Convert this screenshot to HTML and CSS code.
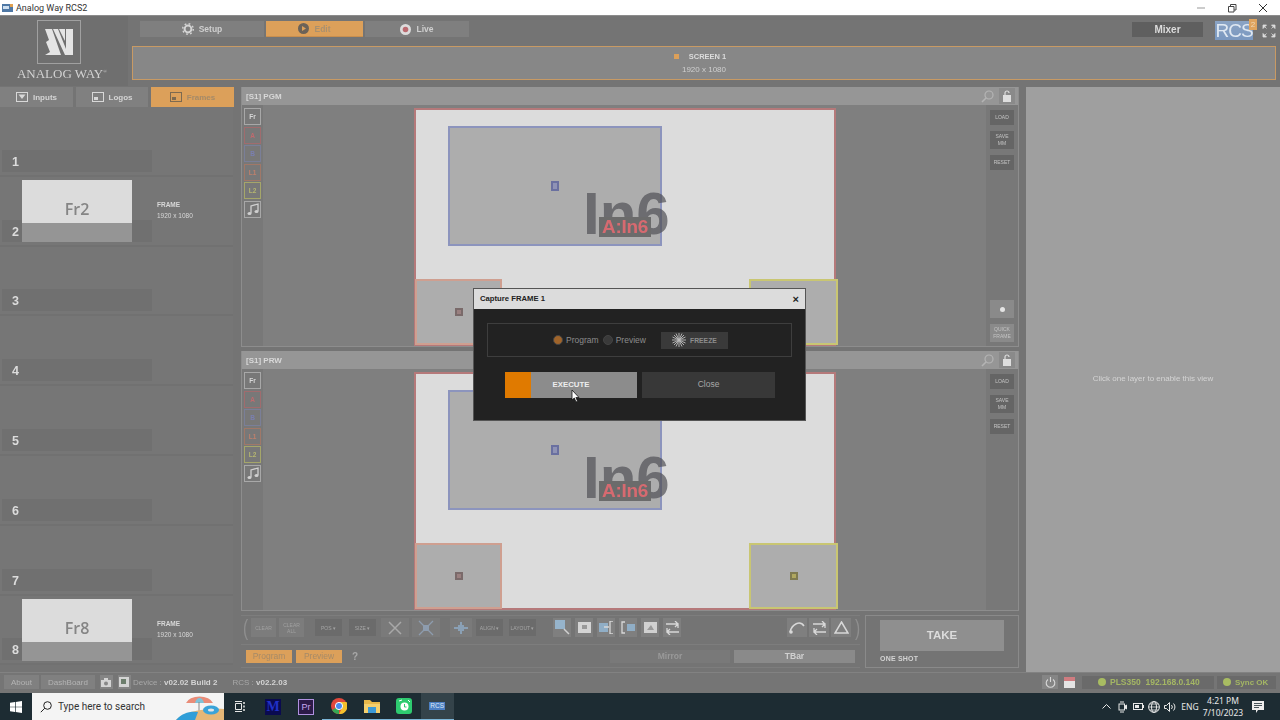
FILE: index.html
```html
<!DOCTYPE html>
<html>
<head>
    <meta charset="utf-8">
    <title>Analog Way RCS2</title>
    <link rel="stylesheet" href="styles.css">
</head>
<body>
    <div class="titlebar">
        <svg class="app-icon" width="11" height="8" viewBox="0 0 11 8"><rect width="11" height="8" fill="#4f78a5"/><rect x="1" y="2" width="6" height="3" fill="#cfe0f0"/><rect x="8" y="0" width="3" height="3" fill="#e0a050"/></svg>
        <span class="title-text">Analog Way RCS2</span>
        <div class="win-controls">
            <svg width="10" height="10" viewBox="0 0 10 10"><path d="M1 5h8" stroke="#999" stroke-width="1"/></svg>
            <svg width="10" height="10" viewBox="0 0 10 10"><path d="M1.500 3.500h5.500v5.500h-5.500zM3.500 3.500v-2h5.500v5.500h-2" fill="none" stroke="#444"/></svg>
            <svg width="10" height="10" viewBox="0 0 10 10"><path d="M1 1l8 8M9 1l-8 8" stroke="#333" stroke-width="1"/></svg>
        </div>
    </div>

    <div class="app">
        <div class="header">
            <div class="logo">
                <div class="logo-box">
                    <svg width="30" height="28" viewBox="0 0 30 28"><path d="M1 1h7l9 26h-16l5-3-4-10 3-2zM9 1h5l8 20v-20h7v26h-8zM15 1h6v12z" fill="#e4e4e4"/></svg>
                </div>
                <div class="logo-name">ANALOG WAY<sup>®</sup></div>
            </div>
            <div class="header-main">
                <div class="nav-row">
                    <div class="mode-tab tab-setup">
                        <svg width="12" height="12" viewBox="0 0 12 12"><circle cx="6" cy="6" r="3.400" fill="none" stroke="#d4d4d4" stroke-width="2"/><circle cx="6" cy="6" r="5.300" fill="none" stroke="#d4d4d4" stroke-width="1.400" stroke-dasharray="1.800 2.360"/></svg>
                        Setup
                    </div>
                    <div class="mode-tab tab-edit">
                        <svg width="11" height="11" viewBox="0 0 11 11"><circle cx="5.500" cy="5.500" r="5.500" fill="#6b6258"/><path d="M4 3l4 2.500-4 2.500z" fill="#dca05a"/></svg>
                        Edit
                    </div>
                    <div class="mode-tab tab-live">
                        <svg width="11" height="11" viewBox="0 0 11 11"><circle cx="5.500" cy="5.500" r="5.500" fill="#dcdcdc"/><circle cx="5.500" cy="5.500" r="2.800" fill="#bb6a70"/></svg>
                        Live
                    </div>
                    <div class="spacer"></div>
                    <div class="mixer">Mixer</div>
                    <div class="rcs-logo">RCS<span class="rcs-two">2</span></div>
                    <svg class="expand" width="14" height="14" viewBox="0 0 14 14"><path d="M1 1h3.500L1 4.500zM13 1v3.500L9.500 1zM1 13v-3.500L4.500 13zM13 13H9.500L13 9.500zM3 3l1.500 1.500M11 3L9.500 4.500M3 11l1.500-1.500M11 11L9.500 9.500" fill="#dcdcdc" stroke="#dcdcdc" stroke-width=".8"/></svg>
                </div>
                <div class="screen-bar">
                    <div class="screen-name"><i class="screen-dot"></i>SCREEN 1</div>
                    <div class="screen-size">1920 x 1080</div>
                </div>
            </div>
        </div>

        <div class="main">
            <div class="left-panel">
                <div class="left-tabs">
                    <div class="left-tab tab-inputs">
                        <svg width="12" height="10" viewBox="0 0 12 10"><rect x=".5" y=".5" width="11" height="9" fill="none" stroke="#d8d8d8"/><path d="M2.500 2.500h7L6 7z" fill="#d8d8d8"/></svg>
                        Inputs
                    </div>
                    <div class="left-tab tab-logos">
                        <svg width="12" height="10" viewBox="0 0 12 10"><rect x=".5" y=".5" width="11" height="9" fill="none" stroke="#d8d8d8"/><rect x="2" y="5" width="4" height="3" fill="#d8d8d8"/></svg>
                        Logos
                    </div>
                    <div class="left-tab tab-frames">
                        <svg width="12" height="10" viewBox="0 0 12 10"><rect x=".5" y=".5" width="11" height="9" fill="none" stroke="#7d6a50"/><rect x="2" y="5" width="4" height="3" fill="#7d6a50"/></svg>
                        Frames
                    </div>
                </div>
                <div class="frame-list">
                    <div class="frame-row"><div class="frame-strip"><span class="frame-num">1</span></div></div>
                    <div class="frame-row">
                        <div class="frame-strip"><span class="frame-num">2</span></div>
                        <div class="frame-thumb"><span class="thumb-label">Fr2</span></div>
                        <div class="frame-info"><b>FRAME</b><span>1920 x 1080</span></div>
                    </div>
                    <div class="frame-row"><div class="frame-strip"><span class="frame-num">3</span></div></div>
                    <div class="frame-row"><div class="frame-strip"><span class="frame-num">4</span></div></div>
                    <div class="frame-row"><div class="frame-strip"><span class="frame-num">5</span></div></div>
                    <div class="frame-row"><div class="frame-strip"><span class="frame-num">6</span></div></div>
                    <div class="frame-row"><div class="frame-strip"><span class="frame-num">7</span></div></div>
                    <div class="frame-row">
                        <div class="frame-strip"><span class="frame-num">8</span></div>
                        <div class="frame-thumb"><span class="thumb-label">Fr8</span></div>
                        <div class="frame-info"><b>FRAME</b><span>1920 x 1080</span></div>
                    </div>
                </div>
            </div>

            <div class="center">
                <div class="view-panel">
                    <div class="view-head">
                        <span class="view-title">[S1] PGM</span>
                        <svg class="view-search" width="13" height="13" viewBox="0 0 13 13"><circle cx="8" cy="5" r="4" fill="none" stroke="#b4b4b4" stroke-width="1.200"/><path d="M5 8l-4 4" stroke="#b4b4b4" stroke-width="1.600"/></svg>
                        <div class="view-lock"><svg width="10" height="12" viewBox="0 0 10 12"><rect x="1" y="5" width="8" height="7" fill="#dedede"/><path d="M3 5V3a2 2 0 0 1 4 0" fill="none" stroke="#dedede" stroke-width="1.200"/></svg></div>
                    </div>
                    <div class="view-body">
                        <div class="layer-rail">
                            <div class="rail-btn rail-fr">Fr</div>
                            <div class="rail-btn rail-a">A</div>
                            <div class="rail-btn rail-b">B</div>
                            <div class="rail-btn rail-l1">L1</div>
                            <div class="rail-btn rail-l2">L2</div>
                            <div class="rail-btn rail-audio"><svg width="12" height="13" viewBox="0 0 12 13"><path d="M4 10V3l7-2v7" fill="none" stroke="#d0d0d0" stroke-width="1.300"/><ellipse cx="2.500" cy="10.500" rx="2" ry="1.500" fill="#d0d0d0"/><ellipse cx="9.500" cy="8.500" rx="2" ry="1.500" fill="#d0d0d0"/></svg></div>
                        </div>
                        <div class="stage">
                            <div class="canvas">
                                <div class="layer layer-main">
                                    <span class="layer-tag tag-blue"></span>
                                </div>
                                <div class="source-name">In6</div>
                                <div class="source-tag">A:In6</div>
                                <div class="layer layer-l1"><span class="layer-tag tag-red"></span></div>
                                <div class="layer layer-l2"><span class="layer-tag tag-yellow"></span></div>
                            </div>
                        </div>
                        <div class="action-rail">
                            <div class="action-btn">LOAD</div>
                            <div class="action-btn action-tall">SAVE<br>MM</div>
                            <div class="action-btn">RESET</div>
                            <div class="spacer"></div>
                            <div class="quick-btn"><i class="quick-dot"></i></div>
                            <div class="quick-btn quick-text">QUICK<br>FRAME</div>
                        </div>
                    </div>
                </div>

                <div class="view-panel">
                    <div class="view-head">
                        <span class="view-title">[S1] PRW</span>
                        <svg class="view-search" width="13" height="13" viewBox="0 0 13 13"><circle cx="8" cy="5" r="4" fill="none" stroke="#b4b4b4" stroke-width="1.200"/><path d="M5 8l-4 4" stroke="#b4b4b4" stroke-width="1.600"/></svg>
                        <div class="view-lock"><svg width="10" height="12" viewBox="0 0 10 12"><rect x="1" y="5" width="8" height="7" fill="#dedede"/><path d="M3 5V3a2 2 0 0 1 4 0" fill="none" stroke="#dedede" stroke-width="1.200"/></svg></div>
                    </div>
                    <div class="view-body">
                        <div class="layer-rail">
                            <div class="rail-btn rail-fr">Fr</div>
                            <div class="rail-btn rail-a">A</div>
                            <div class="rail-btn rail-b">B</div>
                            <div class="rail-btn rail-l1">L1</div>
                            <div class="rail-btn rail-l2">L2</div>
                            <div class="rail-btn rail-audio"><svg width="12" height="13" viewBox="0 0 12 13"><path d="M4 10V3l7-2v7" fill="none" stroke="#d0d0d0" stroke-width="1.300"/><ellipse cx="2.500" cy="10.500" rx="2" ry="1.500" fill="#d0d0d0"/><ellipse cx="9.500" cy="8.500" rx="2" ry="1.500" fill="#d0d0d0"/></svg></div>
                        </div>
                        <div class="stage">
                            <div class="canvas">
                                <div class="layer layer-main">
                                    <span class="layer-tag tag-blue"></span>
                                </div>
                                <div class="source-name">In6</div>
                                <div class="source-tag">A:In6</div>
                                <div class="layer layer-l1"><span class="layer-tag tag-red"></span></div>
                                <div class="layer layer-l2"><span class="layer-tag tag-yellow"></span></div>
                            </div>
                        </div>
                        <div class="action-rail">
                            <div class="action-btn">LOAD</div>
                            <div class="action-btn action-tall">SAVE<br>MM</div>
                            <div class="action-btn">RESET</div>
                        </div>
                    </div>
                </div>

                <div class="controls">
                    <div class="controls-main">
                        <div class="tool-row">
                            <span class="paren">(</span>
                            <div class="tool-btn">CLEAR</div>
                            <div class="tool-btn">CLEAR<br>ALL</div>
                            <div class="tool-drop drop-pos">POS ▾</div>
                            <div class="tool-drop drop-size">SIZE ▾</div>
                            <div class="tool-icon icon-cross"><svg width="16" height="16" viewBox="0 0 16 16"><path d="M2 2l12 12M14 2L2 14" stroke="#a8a8a8" stroke-width="1.500"/></svg></div>
                            <div class="tool-icon"><svg width="16" height="16" viewBox="0 0 16 16"><path d="M1 1l14 14M15 1L1 15" stroke="#8d9cae" stroke-width="1.300"/><rect x="5" y="5" width="6" height="6" fill="#8d9cae"/></svg></div>
                            <div class="tool-icon icon-plus"><svg width="16" height="14" viewBox="0 0 16 14"><path d="M1 7h14M8 1v12" stroke="#8aa0b5" stroke-width="2"/><rect x="5" y="4" width="6" height="6" fill="#8aa0b5"/></svg></div>
                            <div class="tool-drop drop-align">ALIGN ▾</div>
                            <div class="tool-drop drop-layout">LAYOUT ▾</div>
                            <div class="tool-sq sq-first"><svg width="16" height="15" viewBox="0 0 16 15"><rect x="1" y="0" width="10" height="9" fill="#96b4cc"/><path d="M10 9l5 5" stroke="#d0d0d0" stroke-width="1.500"/></svg></div>
                            <div class="tool-sq"><svg width="13" height="11" viewBox="0 0 13 11"><rect width="13" height="11" fill="#d4d4d4"/><rect x="4" y="3" width="5" height="4" fill="#999"/></svg></div>
                            <div class="tool-sq"><svg width="15" height="13" viewBox="0 0 15 13"><rect y="2" width="9" height="9" fill="#90aec6"/><path d="M14 0h-3v13h3M5 6h5" fill="none" stroke="#d8d8d8" stroke-width="1.300"/></svg></div>
                            <div class="tool-sq"><svg width="15" height="13" viewBox="0 0 15 13"><rect x="6" y="3" width="8" height="7" fill="#90aec6"/><path d="M4 1H1v11h3M1 1h3M1 12h3" fill="none" stroke="#d8d8d8" stroke-width="1.300"/></svg></div>
                            <div class="tool-sq"><svg width="13" height="11" viewBox="0 0 13 11"><rect width="13" height="11" fill="#d0d0d0"/><path d="M3 8l4-5 3 5z" fill="#999"/></svg></div>
                            <div class="tool-sq"><svg width="15" height="14" viewBox="0 0 15 14"><path d="M1 3h12v4M14 11H2V7M10 0l3 3-3 3M5 8l-3 3 3 3" fill="none" stroke="#d8d8d8" stroke-width="1.300"/></svg></div>
                            <div class="spacer"></div>
                            <div class="tool-sq sq-plain"><svg width="16" height="13" viewBox="0 0 16 13"><path d="M1 11C3 3 11-1 15 5" fill="none" stroke="#d8d8d8" stroke-width="1.500"/><circle cx="2" cy="11" r="1.800" fill="#d8d8d8"/></svg></div>
                            <div class="tool-sq sq-plain"><svg width="15" height="14" viewBox="0 0 15 14"><path d="M1 3h12v4M14 11H2V7M10 0l3 3-3 3M5 8l-3 3 3 3" fill="none" stroke="#d8d8d8" stroke-width="1.300"/></svg></div>
                            <div class="tool-sq sq-plain"><svg width="15" height="13" viewBox="0 0 15 13"><path d="M7.500 1L14 12H1z" fill="none" stroke="#d8d8d8" stroke-width="1.500"/></svg></div>
                            <span class="paren">)</span>
                        </div>
                        <div class="mode-row">
                            <div class="orange-btn">Program</div>
                            <div class="orange-btn">Preview</div>
                            <span class="help">?</span>
                            <div class="spacer"></div>
                            <div class="mirror-btn">Mirror</div>
                            <div class="tbar-btn">TBar</div>
                        </div>
                    </div>
                    <div class="take-box">
                        <div class="take-btn">TAKE</div>
                        <div class="take-mode">ONE SHOT</div>
                    </div>
                </div>
            </div>

            <div class="right-panel">Click one layer to enable this view</div>
        </div>

        <div class="footer">
            <div class="foot-btn">About</div>
            <div class="foot-btn">DashBoard</div>
            <div class="foot-sq foot-cam"><svg width="10" height="9" viewBox="0 0 10 9"><rect y="2" width="10" height="7" fill="#d4d4d4"/><rect x="3" y="0" width="4" height="2" fill="#d4d4d4"/><circle cx="5" cy="5.500" r="2" fill="#888"/></svg></div>
            <div class="foot-sq foot-pic"><svg width="10" height="10" viewBox="0 0 10 10"><rect width="10" height="10" fill="#d4d4d4"/><rect x="2" y="2" width="5" height="5" fill="#6c7d6c"/></svg></div>
            <span class="foot-text">Device : <b>v02.02 Build 2</b></span>
            <span class="foot-text foot-rcs">RCS : <b>v02.2.03</b></span>
            <div class="spacer"></div>
            <div class="foot-sq foot-power"><svg width="11" height="11" viewBox="0 0 11 11"><path d="M3 2.500a4.300 4.300 0 1 0 5 0M5.500 0v5" fill="none" stroke="#d8d8d8" stroke-width="1.100"/></svg></div>
            <div class="foot-flag"></div>
            <div class="status-box status-device"><i class="led"></i>PLS350&nbsp; 192.168.0.140</div>
            <div class="status-box status-sync"><i class="led"></i>Sync OK</div>
        </div>
    </div>

    <div class="taskbar">
        <div class="start"><svg width="12" height="12" viewBox="0 0 12 12"><path d="M0 1.700l5-.7v4.700H0zM5.700.9L12 0v5.700H5.700zM0 6.300h5V11l-5-.7zM5.700 6.300H12V12l-6.300-.9z" fill="#fff"/></svg></div>
        <div class="search">
            <svg width="12" height="12" viewBox="0 0 12 12"><circle cx="7.500" cy="4.500" r="3.800" fill="none" stroke="#222" stroke-width="1"/><path d="M4.800 7.200L.8 11.200" stroke="#222" stroke-width="1"/></svg>
            <span class="search-text">Type here to search</span>
            <svg class="search-art" width="48" height="27" viewBox="0 0 48 27"><path d="M10 10a14 9 0 0 1 27 0z" fill="#e98c78"/><path d="M19 10a5 9 0 0 1 9 0z" fill="#7fc2d8"/><path d="M23 9v13" stroke="#888"/><path d="M0 27c8-9 30-12 48-11v11z" fill="#e5b777"/><path d="M0 27c6-7 14-9 22-8l-3 8z" fill="#2f9ed8"/><ellipse cx="35" cy="17" rx="8" ry="4.500" fill="#3aa3d8"/><ellipse cx="35" cy="17" rx="3" ry="1.500" fill="#e5e5e5"/></svg>
        </div>
        <div class="task-icons">
            <div class="task-icon"><svg width="12" height="11" viewBox="0 0 12 11"><path d="M1 .5h7M1 10.500h7M1.500 2.500h6v6h-6z" fill="none" stroke="#e8e8e8"/><path d="M10 1v2M10 4.500v2M10 8v2" stroke="#e8e8e8" stroke-width="1.500"/></svg></div>
            <div class="task-icon"><span class="ico-m">M</span></div>
            <div class="task-icon"><span class="ico-pr">Pr</span></div>
            <div class="task-icon icon-open"><svg width="16" height="16" viewBox="0 0 16 16"><circle cx="8" cy="8" r="8" fill="#e0483c"/><path d="M8 8L1.100 12A8 8 0 0 0 8 16z" fill="#35a853"/><path d="M8 4h7.500A8 8 0 0 1 8 16l4-8z" fill="#f5c02c"/><circle cx="8" cy="8" r="3.600" fill="#4a8bf0" stroke="#fff"/></svg></div>
            <div class="task-icon icon-open"><svg width="16" height="14" viewBox="0 0 16 14"><path d="M0 1h6l2 2h8v11H0z" fill="#e8b84a"/><rect y="5" width="16" height="9" fill="#f4d06e"/><rect x="4" y="8" width="8" height="6" fill="#3c9ad8"/></svg></div>
            <div class="task-icon icon-open"><svg width="16" height="16" viewBox="0 0 16 16"><rect width="16" height="16" rx="3" fill="#2ecb70"/><circle cx="8.500" cy="8.500" r="4" fill="#fff"/><path d="M8.500 6v3h2" fill="none" stroke="#2ecb70"/><path d="M3 3l3-1M12 2l2 2" stroke="#fff"/></svg></div>
            <div class="task-icon icon-active"><span class="ico-rcs">RCS</span></div>
        </div>
        <div class="spacer"></div>
        <div class="tray">
            <div class="tray-item"><svg width="9" height="5" viewBox="0 0 9 5"><path d="M.5 4.500l4-4 4 4" fill="none" stroke="#e8e8e8"/></svg></div>
            <div class="tray-item"><svg width="9" height="12" viewBox="0 0 9 12"><rect x="1" y="3" width="5.500" height="6" fill="none" stroke="#e8e8e8"/><path d="M7 5l2-1v4l-2-1zM2 1h4M2 11h4" stroke="#e8e8e8" fill="#e8e8e8"/></svg></div>
            <div class="tray-item"><svg width="11" height="7" viewBox="0 0 11 7"><rect x=".5" y=".5" width="9" height="6" fill="none" stroke="#e8e8e8"/><rect x="2" y="2" width="4" height="3" fill="#e8e8e8"/><rect x="10" y="2" width="1" height="3" fill="#e8e8e8"/></svg></div>
            <div class="tray-item"><svg width="12" height="12" viewBox="0 0 12 12"><circle cx="6" cy="6" r="5.400" fill="none" stroke="#e8e8e8"/><ellipse cx="6" cy="6" rx="2.500" ry="5.400" fill="none" stroke="#e8e8e8"/><path d="M.6 6h10.800M1.500 3h9M1.500 9h9" stroke="#e8e8e8" stroke-width=".8"/></svg></div>
            <div class="tray-item"><svg width="12" height="10" viewBox="0 0 12 10"><path d="M.5 3.500h2l3-3v9l-3-3h-2z" fill="none" stroke="#e8e8e8"/><path d="M7.500 3a3 3 0 0 1 0 4M9.500 1.500a5 5 0 0 1 0 7" fill="none" stroke="#e8e8e8"/></svg></div>
            <span class="tray-lang">ENG</span>
            <div class="clock"><span>4:21 PM</span><span>7/10/2023</span></div>
            <svg class="notify" width="12" height="12" viewBox="0 0 12 12"><path d="M0 0h12v9H6l-2 3V9H0z" fill="#eee"/><path d="M2 2.500h8M2 4.500h8M2 6.500h5" stroke="#1d2c33" stroke-width=".8"/></svg>
        </div>
    </div>

    <div class="dialog">
        <div class="dialog-head">
            <span class="dialog-title">Capture FRAME 1</span>
            <span class="dialog-close">×</span>
        </div>
        <div class="dialog-body">
            <div class="source-box">
                <span class="radio radio-on"></span><span class="radio-label">Program</span>
                <span class="radio"></span><span class="radio-label">Preview</span>
                <div class="freeze-btn">
                    <svg width="14" height="14" viewBox="0 0 14 14"><path d="M7 0v14M0 7h14M2 2l10 10M12 2L2 12M4 .5l6 13M10 .5l-6 13M.5 4l13 6M.5 10l13-6" stroke="#bdbdbd" stroke-width=".9"/></svg>
                    FREEZE
                </div>
            </div>
            <div class="dialog-actions">
                <div class="execute-btn"><i class="execute-mark"></i><span class="execute-label">EXECUTE</span></div>
                <div class="close-btn">Close</div>
            </div>
        </div>
    </div>

    <svg class="cursor" width="9" height="14" viewBox="0 0 9 14"><path d="M1 1v10l2.300-2 1.700 4 1.600-.7-1.700-3.800H8z" fill="#fff" stroke="#111" stroke-width=".8"/></svg>
</body>
</html>
```

FILE: styles.css
```css
* {
    box-sizing: border-box;
}

html, body {
    margin: 0;
    height: 720px;
    overflow: hidden;
}

body {
    position: relative;
    width: 1280px;
    display: flex;
    flex-direction: column;
    font-family: "Liberation Sans", Arial, sans-serif;
    background: #1d2c33;
}

.spacer {
    flex: 1;
}

/* window title */

.titlebar {
    height: 15px;
    flex: none;
    display: flex;
    align-items: center;
    background: #fff;
    padding-left: 2px;
}

.title-text {
    margin-left: 3px;
    font: 9px Roboto, sans-serif;
    color: #333;
}

.win-controls {
    margin-left: auto;
    display: flex;
    gap: 21px;
    padding-right: 12px;
}

/* app shell - the video it comes from is a bit soft */

.app {
    height: 678px;
    flex: none;
    display: flex;
    flex-direction: column;
    background: #747474;
    border-top: 1px solid #8c8c8c;
    filter: blur(0.4px);
}

.header {
    height: 70px;
    flex: none;
    display: flex;
}

.logo {
    width: 128px;
    flex: none;
    display: flex;
    flex-direction: column;
    align-items: center;
    padding-top: 4px;
    background: #6f6f6f;
}

.logo-box {
    width: 44px;
    height: 44px;
    margin-right: 10px;
    display: flex;
    align-items: center;
    justify-content: center;
    border: 1px solid #a0a0a0;
}

.logo-name {
    margin: 2px 4px 0 0;
    font: 13px "Liberation Serif", serif;
    color: #d2d2d2;
    white-space: nowrap;
}

.logo-name sup {
    font-size: 5px;
}

.header-main {
    flex: 1;
    display: flex;
    flex-direction: column;
    padding: 5px 4px 0 4px;
}

.nav-row {
    height: 25px;
    display: flex;
    align-items: flex-start;
}

.mode-tab {
    height: 16px;
    margin-right: 2px;
    display: flex;
    align-items: center;
    justify-content: center;
    gap: 5px;
    background: #7f7f7f;
    font-size: 8.500px;
    font-weight: bold;
    color: #cfcfcf;
}

.tab-setup {
    margin-left: 8px;
    width: 124px;
}

.tab-edit {
    width: 97px;
    background: #dca05a;
    color: #a9906f;
    border-bottom: 1px solid #c98f4e;
}

.tab-live {
    width: 104px;
}

.mixer {
    width: 71px;
    height: 15px;
    margin-top: 1px;
    display: flex;
    align-items: center;
    justify-content: center;
    background: #5f5f5f;
    font-size: 10px;
    font-weight: bold;
    color: #dcdcdc;
}

.rcs-logo {
    position: relative;
    width: 38px;
    height: 19px;
    margin: 0 9px 0 12px;
    background: linear-gradient(#8aa3c4, #7a98c0);
    font-size: 19px;
    line-height: 19px;
    letter-spacing: -1px;
    text-align: center;
    color: #dfe8f2;
}

.rcs-two {
    position: absolute;
    top: -2px;
    right: -4px;
    width: 8px;
    height: 11px;
    background: #e0a45e;
    font-size: 8px;
    line-height: 11px;
    letter-spacing: 0;
    color: #f0d8b8;
}

.expand {
    margin-top: 3px;
}

.screen-bar {
    height: 34px;
    display: flex;
    flex-direction: column;
    align-items: center;
    justify-content: center;
    gap: 4px;
    background: #878787;
    border: 1px solid #c89a64;
    color: #dcdcdc;
}

.screen-name {
    display: flex;
    align-items: center;
    padding-right: 8px;
    font-size: 7.500px;
    font-weight: bold;
    line-height: 9px;
}

.screen-dot {
    width: 5px;
    height: 5px;
    margin-right: 10px;
    background: #dca05a;
}

.screen-size {
    font-size: 8px;
    line-height: 9px;
    color: #cfcfcf;
}

/* main area */

.main {
    flex: 1;
    min-height: 0;
    display: flex;
    padding-top: 1px;
}

.left-panel {
    width: 234px;
    flex: none;
    display: flex;
    flex-direction: column;
}

.left-tabs {
    height: 20px;
    flex: none;
    display: flex;
    gap: 3px;
}

.left-tab {
    display: flex;
    align-items: center;
    justify-content: center;
    gap: 5px;
    background: #808080;
    font-size: 8px;
    font-weight: bold;
    color: #d4d4d4;
}

.tab-inputs {
    width: 73px;
}

.tab-logos {
    width: 72px;
}

.tab-frames {
    width: 83px;
    background: #dca05a;
    color: #a58a68;
}

.frame-list {
    flex: 1;
    display: flex;
    flex-direction: column;
}

.frame-row {
    position: relative;
    height: 69.800px;
    flex: none;
    margin-right: 1px;
    border-bottom: 2px solid #717171;
    background: #767676;
}

.frame-strip {
    position: absolute;
    left: 2px;
    right: 81px;
    bottom: 3px;
    height: 22px;
    background: #707070;
}

.frame-num {
    position: absolute;
    left: 10px;
    top: 5px;
    font-size: 12.500px;
    font-weight: bold;
    line-height: 15px;
    color: #dcdcdc;
}

.frame-thumb {
    position: absolute;
    left: 22px;
    top: 3px;
    width: 110px;
    height: 62px;
    display: flex;
    justify-content: center;
    padding-top: 19px;
    background: linear-gradient(#dcdcdc 43px, #959595 43px);
}

.thumb-label {
    font: 600 16px "Open Sans", sans-serif;
    line-height: 20px;
    color: #858585;
}

.frame-info {
    position: absolute;
    left: 157px;
    top: 24px;
    display: flex;
    flex-direction: column;
    gap: 3px;
    font-size: 6.500px;
    line-height: 8px;
    color: #d8d8d8;
}

/* PGM and PRW views */

.center {
    width: 778px;
    flex: none;
    margin-left: 7px;
    display: flex;
    flex-direction: column;
    gap: 4px;
}

.view-panel {
    height: 260px;
    flex: none;
    display: flex;
    flex-direction: column;
    border: 1px solid #8d8d8d;
    border-top: 0;
}

.view-head {
    height: 18px;
    flex: none;
    display: flex;
    align-items: center;
    background: #969696;
    padding: 0 3px 0 4px;
}

.view-title {
    font-size: 8px;
    font-weight: bold;
    color: #d8d8d8;
}

.view-search {
    margin-left: auto;
    margin-right: 5px;
}

.view-lock {
    width: 16px;
    height: 16px;
    display: flex;
    align-items: center;
    justify-content: center;
    background: #8a8a8a;
}

.view-body {
    flex: 1;
    min-height: 0;
    display: flex;
    background: #7f7f7f;
}

.layer-rail {
    width: 21px;
    flex: none;
    display: flex;
    flex-direction: column;
    gap: 1.600px;
    padding: 3px 0 0 2px;
    background: #787878;
}

.rail-btn {
    width: 17px;
    height: 17px;
    display: flex;
    align-items: center;
    justify-content: center;
    border: 1px solid #a8a8a8;
    font-size: 6.500px;
    font-weight: bold;
    color: #d8d8d8;
}

.rail-a {
    border-color: #a06c6e;
    color: #c06a6e;
}

.rail-b {
    border-color: #7a7f98;
    color: #7a7fb0;
}

.rail-l1 {
    border-color: #a07868;
    color: #c0806c;
}

.rail-l2 {
    border-color: #a5a66a;
    color: #b5b670;
}

.stage {
    flex: 1;
    padding: 3px 0 0 151px;
}

.canvas {
    position: relative;
    width: 422px;
    height: 238px;
    background: #dcdcdc;
    border: 2px solid #b5797a;
}

.layer {
    position: absolute;
    display: flex;
    align-items: center;
    justify-content: center;
    background: #adadad;
}

.layer-main {
    left: 32px;
    top: 16px;
    width: 214px;
    height: 120px;
    border: 2px solid #8c94bd;
}

.layer-l1 {
    left: -1px;
    top: 169px;
    width: 87px;
    height: 66px;
    border: 2px solid #cf9f90;
}

.layer-l2 {
    left: 333px;
    top: 169px;
    width: 89px;
    height: 66px;
    border: 2px solid #c9c672;
}

.layer-tag {
    width: 8px;
    height: 10px;
    border: 2px solid #6a70a0;
    background: #8f93b5;
}

.tag-red {
    height: 8px;
    border-color: #7a6a6a;
    background: #9a8080;
}

.tag-yellow {
    height: 8px;
    border-color: #7f7a50;
    background: #b0a860;
}

.source-name {
    position: absolute;
    left: 167px;
    top: 73px;
    font-size: 60px;
    font-weight: bold;
    line-height: 62px;
    color: rgba(80, 80, 85, 0.7);
}

.source-tag {
    position: absolute;
    left: 183px;
    top: 107px;
    width: 52px;
    height: 20px;
    background: #6b6b6b;
    font-size: 19px;
    font-weight: bold;
    line-height: 20px;
    letter-spacing: -.3px;
    text-align: center;
    white-space: nowrap;
    color: #d66a70;
}

.action-rail {
    width: 32px;
    flex: none;
    display: flex;
    flex-direction: column;
    align-items: center;
    gap: 6px;
    padding: 5px 0 4px;
    background: #787878;
}

.action-btn {
    width: 24px;
    height: 15px;
    display: flex;
    align-items: center;
    justify-content: center;
    background: #656565;
    font-size: 5px;
    line-height: 7px;
    text-align: center;
    color: #c4c4c4;
}

.action-tall {
    height: 18px;
}

.quick-btn {
    width: 24px;
    height: 18px;
    display: flex;
    align-items: center;
    justify-content: center;
    background: #8a8a8a;
    font-size: 5px;
    line-height: 7px;
    text-align: center;
    color: #c4c4c4;
}

.quick-dot {
    width: 5px;
    height: 5px;
    border-radius: 50%;
    background: #e4e4e4;
}

/* bottom controls */

.controls {
    height: 53px;
    flex: none;
    display: flex;
    gap: 5px;
}

.controls-main {
    flex: 1;
    min-width: 0;
    display: flex;
    flex-direction: column;
}

.tool-row {
    height: 30px;
    flex: none;
    display: flex;
    align-items: flex-start;
    gap: 3px;
    padding: 2px 0 0 1px;
    border-bottom: 1px solid #7d7d7d;
    border-top: 1px solid #7d7d7d;
}

.paren {
    width: 6px;
    font: 22px/19px "Liberation Sans", sans-serif;
    color: #8f8f8f;
    transform: scaleX(.7);
}

.tool-btn {
    width: 25px;
    height: 19px;
    display: flex;
    align-items: center;
    justify-content: center;
    background: #7c7c7c;
    font-size: 5px;
    line-height: 6px;
    text-align: center;
    color: #a0a0a0;
}

.tool-drop {
    width: 27px;
    height: 17px;
    margin-top: 1px;
    display: flex;
    align-items: center;
    justify-content: center;
    background: #6b6b6b;
    font-size: 5px;
    color: #a5a5a5;
    white-space: nowrap;
}

.drop-pos {
    margin-left: 8px;
}

.drop-size {
    margin-left: 4px;
}

.drop-align {
    margin-left: 1px;
}

.drop-layout {
    margin-left: 3px;
}

.tool-icon {
    width: 28px;
    height: 19px;
    display: flex;
    align-items: center;
    justify-content: center;
    background: #7a7a7a;
}

.icon-cross {
    margin-left: 2px;
}

.icon-plus {
    width: 22px;
    margin-left: 7px;
}

.tool-sq {
    width: 18px;
    height: 19px;
    margin-left: 1px;
    display: flex;
    align-items: center;
    justify-content: center;
    background: #7f7f7f;
}

.sq-first {
    margin-left: 14px;
}

.sq-plain {
    width: 20px;
    margin-left: -1px;
}

.mode-row {
    flex: 1;
    display: flex;
    align-items: center;
    gap: 4px;
    padding: 0 5px;
    border-bottom: 1px solid #7d7d7d;
}

.orange-btn {
    width: 46px;
    height: 13px;
    display: flex;
    align-items: center;
    justify-content: center;
    background: #dca05a;
    font-size: 8.500px;
    color: #a58a68;
}

.help {
    margin-left: 6px;
    font-size: 10px;
    font-weight: bold;
    color: #a8a8a8;
}

.mirror-btn,
.tbar-btn {
    width: 120px;
    height: 13px;
    display: flex;
    align-items: center;
    justify-content: center;
    background: #797979;
    font-size: 8.500px;
    font-weight: bold;
    color: #999;
}

.tbar-btn {
    width: 121px;
    background: #8a8a8a;
    color: #d0d0d0;
}

.take-box {
    width: 154px;
    flex: none;
    padding: 4px 14px 0 14px;
    border: 1px solid #8a8a8a;
}

.take-btn {
    height: 31px;
    display: flex;
    align-items: center;
    justify-content: center;
    padding-bottom: 1px;
    background: #8f8f8f;
    font-size: 11.500px;
    font-weight: bold;
    color: #dcdcdc;
}

.take-mode {
    margin-top: 4px;
    font-size: 7px;
    font-weight: bold;
    letter-spacing: .2px;
    color: #d4d4d4;
}

.right-panel {
    width: 254px;
    flex: none;
    margin-left: 7px;
    padding-top: 287px;
    background: #9f9f9f;
    font-size: 8px;
    text-align: center;
    color: #d4d4d4;
}

/* footer */

.footer {
    height: 21px;
    flex: none;
    display: flex;
    align-items: center;
    gap: 2px;
    padding: 0 4px 2px;
    background: #757575;
    border-top: 1px solid #828282;
    font-size: 8px;
    color: #b4b4b4;
}

.foot-btn {
    height: 14px;
    padding: 0 7px;
    display: flex;
    align-items: center;
    background: #808080;
}

.foot-sq {
    width: 13px;
    height: 14px;
    display: flex;
    align-items: center;
    justify-content: center;
    background: #858585;
}

.foot-cam {
    margin-left: 3px;
}

.foot-pic {
    margin-left: 3px;
}

.foot-text {
    color: #a8a8a8;
}

.foot-text b {
    color: #d4d4d4;
}

.foot-rcs {
    margin-left: 13px;
}

.foot-power {
    width: 16px;
    margin-right: 4px;
}

.foot-flag {
    width: 11px;
    height: 11px;
    margin-right: 5px;
    background: linear-gradient(#cf7c80 40%, #e4e4e4 40%);
}

.status-box {
    height: 13px;
    display: flex;
    align-items: center;
    gap: 4px;
    padding-left: 17px;
    background: #6a6a6a;
    font-size: 8.500px;
    font-weight: bold;
    color: #a4b664;
}

.status-device {
    width: 132px;
    margin-right: 1px;
}

.status-sync {
    width: 59px;
    padding-left: 7px;
    font-size: 8px;
}

.led {
    width: 8px;
    height: 8px;
    margin-left: -1px;
    flex: none;
    border-radius: 50%;
    background: #a8bc62;
}

/* windows taskbar */

.taskbar {
    height: 27px;
    flex: none;
    display: flex;
    align-items: center;
    background: #1d2c33;
}

.start {
    width: 32px;
    height: 27px;
    display: flex;
    align-items: center;
    justify-content: center;
}

.search {
    position: relative;
    width: 192px;
    height: 27px;
    display: flex;
    align-items: center;
    padding-left: 8px;
    background: #f4f4f4;
}

.search-text {
    margin-left: 6px;
    font: 10px Roboto, sans-serif;
    color: #333;
}

.search-art {
    position: absolute;
    right: 0;
    bottom: 0;
}

.task-icons {
    display: flex;
}

.task-icon {
    width: 32.800px;
    height: 27px;
    display: flex;
    align-items: center;
    justify-content: center;
}

.icon-open {
    border-bottom: 1px solid #7cb6d8;
}

.icon-active {
    background: #34434a;
    border-bottom: 1px solid #7cb6d8;
}

.ico-m {
    width: 16px;
    height: 16px;
    background: #0a0a50;
    font: bold 14px "Liberation Serif", serif;
    line-height: 16px;
    text-align: center;
    color: #2030c8;
}

.ico-pr {
    width: 16px;
    height: 16px;
    border: 1px solid #b090e0;
    background: #2c1a48;
    font-size: 9px;
    line-height: 14px;
    text-align: center;
    color: #c8a8f0;
}

.ico-rcs {
    padding: 0 1px;
    background: #4c80c4;
    font-size: 6.500px;
    line-height: 8px;
    color: #dfe8f2;
}

.tray {
    display: flex;
    align-items: center;
    padding-right: 16px;
    color: #e8e8e8;
}

.tray-item {
    width: 16px;
    display: flex;
    justify-content: center;
}

.tray-lang {
    width: 24px;
    font: 8.500px "Noto Sans", sans-serif;
    text-align: center;
}

.clock {
    width: 42px;
    display: flex;
    flex-direction: column;
    align-items: center;
    font: 8.500px "Noto Sans", sans-serif;
    line-height: 12px;
}

.notify {
    margin-left: 8px;
}

/* capture dialog */

.dialog {
    position: absolute;
    left: 473px;
    top: 288px;
    width: 333px;
    height: 133px;
    display: flex;
    flex-direction: column;
    border: 1px solid #555;
    background: #222;
}

.dialog-head {
    height: 20px;
    flex: none;
    display: flex;
    align-items: center;
    justify-content: space-between;
    padding: 0 6px 1px;
    background: #dcdcdc;
    color: #222;
}

.dialog-title {
    font-size: 7.700px;
    font-weight: bold;
}

.dialog-close {
    font-size: 11px;
    font-weight: bold;
}

.dialog-body {
    flex: 1;
    padding: 14px 13px 0;
}

.source-box {
    height: 34px;
    display: flex;
    align-items: center;
    justify-content: center;
    padding-left: 2px;
    border: 1px solid #3e3e3e;
    color: #8c8c8c;
}

.radio {
    width: 10px;
    height: 10px;
    border-radius: 50%;
    background: #3a3a3a;
    border: 1px solid #444;
}

.radio-on {
    background: #a0642a;
}

.radio-label {
    margin: 0 4px 0 3px;
    font-size: 8.500px;
}

.freeze-btn {
    width: 67px;
    height: 17px;
    margin-left: 11px;
    display: flex;
    align-items: center;
    justify-content: center;
    gap: 4px;
    background: #3a3a3a;
    font-size: 6.800px;
    font-weight: bold;
}

.dialog-actions {
    display: flex;
    gap: 5px;
    margin: 15px 0 0 18px;
}

.execute-btn {
    position: relative;
    width: 132px;
    height: 26px;
    display: flex;
    align-items: center;
    justify-content: center;
    padding-bottom: 2px;
    background: #8c8c8c;
    font-size: 7.800px;
    font-weight: bold;
    color: #eee;
}

.execute-mark {
    position: absolute;
    left: 0;
    top: 0;
    width: 26px;
    height: 26px;
    background: #e07a00;
}

.close-btn {
    width: 133px;
    height: 26px;
    display: flex;
    align-items: center;
    justify-content: center;
    padding-bottom: 2px;
    background: #383838;
    font-size: 8.500px;
    color: #a8a8a8;
}

.cursor {
    position: absolute;
    left: 571px;
    top: 389px;
}
```
